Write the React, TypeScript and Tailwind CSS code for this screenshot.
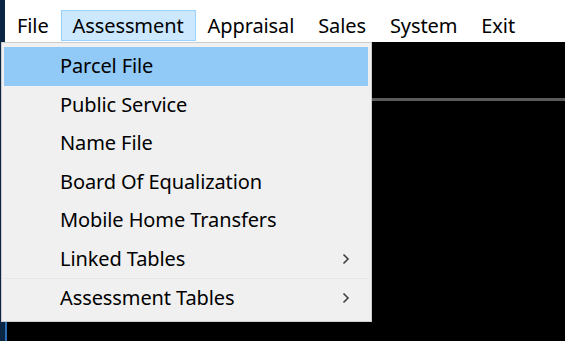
import React from "react";

const barItems = ["File", "Assessment", "Appraisal", "Sales", "System", "Exit"];

const menuItems = [
  { label: "Parcel File", active: true },
  { label: "Public Service" },
  { label: "Name File" },
  { label: "Board Of Equalization" },
  { label: "Mobile Home Transfers" },
  { label: "Linked Tables", sub: true },
  { label: "Assessment Tables", sub: true, sep: true },
];

function Chevron() {
  return (
    <svg width="8" height="12" viewBox="0 0 8 12" className="text-[#404040]">
      <polyline points="1.5,1.5 6,6 1.5,10.5" fill="none" stroke="currentColor" strokeWidth="1.6" />
    </svg>
  );
}

export default function App() {
  return (
    <div
      className="relative flex h-[341px] w-[565px] overflow-hidden bg-black text-black"
      style={{ fontFamily: '"Noto Sans", "Open Sans", sans-serif' }}
    >
      {/* window edge */}
      <div className="w-[5px] shrink-0 bg-[#0b2545]" />

      <div className="flex flex-1 flex-col">
        {/* menu bar */}
        <div className="flex h-[42px] items-end bg-white pb-[1px] text-[20px] tracking-[-0.1px]">
          {barItems.map((item) => (
            <div
              key={item}
              className={
                item === "Assessment"
                  ? "flex h-[31px] items-center border border-[#99d1ff] bg-[#cce8ff] px-[11px]"
                  : "flex h-[31px] items-center px-[12px]"
              }
            >
              {item}
            </div>
          ))}
        </div>

        {/* client area */}
        <div className="flex-1 border-l-2 border-[#2d6db4]">
          <div className="mt-[56px] h-[3px] bg-[#5b5b5b]" />
        </div>
      </div>

      {/* dropdown */}
      <div className="absolute left-[1px] top-[42px] h-[280px] w-[371px] border border-[#cccccc] bg-[#f0f0f0] pl-[2px] pr-[3px] pt-[4px] text-[20px] tracking-[-0.1px]">
        {menuItems.map((m) => (
          <div
            key={m.label}
            className={
              "flex h-[38.5px] items-center pl-[56px] pr-[18px] " +
              (m.active ? "bg-[#91c9f7] " : "") +
              (m.sep ? "border-t border-[#e6e6e6]" : "")
            }
          >
            <span className="flex-1">{m.label}</span>
            {m.sub && <Chevron />}
          </div>
        ))}
      </div>
    </div>
  );
}
